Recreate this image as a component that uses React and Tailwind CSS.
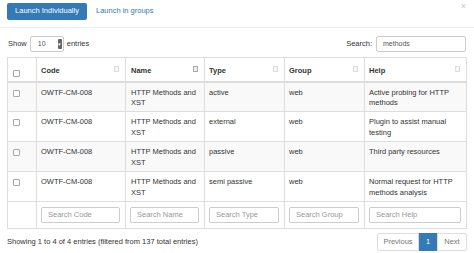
import React from "react";

const rows = [
  { type: "active", help: "Active probing for HTTP methods" },
  { type: "external", help: "Plugin to assist manual testing" },
  { type: "passive", help: "Third party resources" },
  { type: "semi passive", help: "Normal request for HTTP methods analysis" },
];

function SortIcon({ dark }) {
  return (
    <span
      className={`absolute right-[6px] top-[8px] block h-[6px] w-[5px] border ${
        dark ? "border-[#aaa] bg-[#eee]" : "border-[#ddd] bg-[#f7f7f7]"
      }`}
    />
  );
}

function Box() {
  return (
    <span className="mt-[2px] block h-[7px] w-[7px] rounded-[1px] border border-[#a8a8a8] bg-white" />
  );
}

export default function App() {
  const th =
    "relative border border-[#ddd] border-b-2 px-[4px] pb-[4px] text-left align-bottom font-bold";
  const td = "border border-[#ddd] align-top pt-[5px] pl-[4px] pr-[3px]";
  return (
    <div className="h-[253px] w-[474px] overflow-hidden bg-white font-['Liberation_Sans',Arial,sans-serif] text-[7.5px] leading-[10.5px] text-[#333]">
      {/* top tabs */}
      <div className="relative flex h-[28px] items-start border-b border-[#eee] pl-[7px] pt-[3px]">
        <div className="flex h-[17px] w-[80px] items-center justify-center rounded-[2px] bg-[#337ab7] text-white">
          Launch Individually
        </div>
        <div className="ml-[9px] flex h-[17px] items-center text-[#337ab7]">Launch in groups</div>
        <span className="absolute right-[8px] top-[1px] text-[9px] text-[#c4c4c4]">×</span>
      </div>

      {/* controls */}
      <div className="mt-[8px] flex h-[16px] items-center justify-between px-[8px]">
        <div className="flex items-center">
          <span>Show</span>
          <div className="ml-[3px] flex h-[16px] w-[34px] items-center justify-between rounded-[2px] border border-[#ccc] pl-[7px] pr-[1px] text-[7px] text-[#555]">
            <span>10</span>
            <span className="flex h-[10px] w-[4px] items-center justify-center rounded-[1px] bg-[#666] text-[5px] leading-none text-white">▾</span>
          </div>
          <span className="ml-[3px]">entries</span>
        </div>
        <div className="flex items-center">
          <span>Search:</span>
          <div className="ml-[4px] flex h-[16px] w-[90px] items-center rounded-[2px] border border-[#ccc] pl-[6px] text-[7px] text-[#555]">
            methods
          </div>
        </div>
      </div>

      {/* table */}
      <table className="ml-[7px] mt-[5px] w-[459px] table-fixed border-collapse">
        <colgroup>
          <col className="w-[29px]" />
          <col className="w-[89px]" />
          <col className="w-[79px]" />
          <col className="w-[80px]" />
          <col className="w-[80px]" />
          <col className="w-[102px]" />
        </colgroup>
        <thead>
          <tr className="h-[24px]">
            <th className={th + " pl-[5px]"}>
              <Box />
            </th>
            <th className={th}>
              Code
              <SortIcon />
            </th>
            <th className={th + " pl-[5px]"}>
              Name
              <SortIcon dark />
            </th>
            <th className={th}>
              Type
              <SortIcon />
            </th>
            <th className={th}>
              Group
              <SortIcon />
            </th>
            <th className={th}>
              Help
              <SortIcon />
            </th>
          </tr>
        </thead>
        <tbody>
          {rows.map((r, i) => (
            <tr key={i} className={`h-[30px] ${i % 2 === 0 ? "bg-[#f9f9f9]" : "bg-white"}`}>
              <td className={td + " pl-[5px]"}>
                <Box />
              </td>
              <td className={td}>OWTF-CM-008</td>
              <td className={td + " pl-[5px] pr-[2px]"}>HTTP Methods and XST</td>
              <td className={td}>{r.type}</td>
              <td className={td}>web</td>
              <td className={td}>{r.help}</td>
            </tr>
          ))}
          <tr className="h-[27px]">
            <td className="border border-[#ddd]" />
            {["Search Code", "Search Name", "Search Type", "Search Group", "Search Help"].map((p) => (
              <td key={p} className="border border-[#ddd] pl-[4px] pr-[5px] align-middle">
                <div className="flex h-[16px] w-full items-center rounded-[2px] border border-[#ccc] bg-white pl-[6px] text-[#999]">
                  {p}
                </div>
              </td>
            ))}
          </tr>
        </tbody>
      </table>

      {/* footer */}
      <div className="mt-[4px] flex items-center justify-between pl-[7px] pr-[7px]">
        <span>Showing 1 to 4 of 4 entries (filtered from 137 total entries)</span>
        <div className="flex h-[18px] items-stretch">
          <span className="flex w-[42px] items-center justify-center rounded-l-[2px] border border-[#ddd] text-[#777]">
            Previous
          </span>
          <span className="flex w-[18px] items-center justify-center bg-[#337ab7] text-white">1</span>
          <span className="flex w-[30px] items-center justify-center rounded-r-[2px] border border-[#ddd] text-[#777]">
            Next
          </span>
        </div>
      </div>
    </div>
  );
}
